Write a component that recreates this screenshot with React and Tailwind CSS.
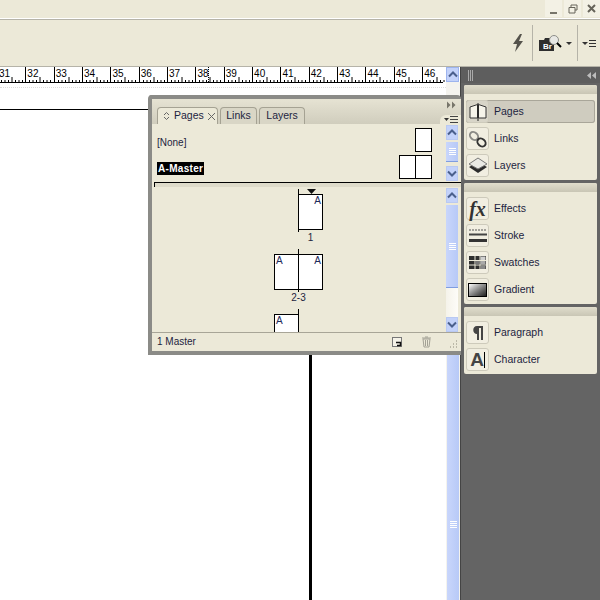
const rulerNumbers = [31, 32, 33, 34, 35, 36, 37, 38, 39, 40, 41, 42, 43, 44, 45, 46];

const UpIcon = () => (
  <svg width="10" height="7" viewBox="0 0 10 7">
    <path d="M1 5.5 L5 1.5 L9 5.5" fill="none" stroke="#4a5f8c" strokeWidth="2" />
  </svg>
);

const DownIcon = () => (
  <svg width="10" height="7" viewBox="0 0 10 7">
    <path d="M1 1.5 L5 5.5 L9 1.5" fill="none" stroke="#4a5f8c" strokeWidth="2" />
  </svg>
);

const Grip = () => (
  <div className="flex flex-col gap-px">
    <span className="h-px w-[7px] bg-white" />
    <span className="h-px w-[7px] bg-white" />
    <span className="h-px w-[7px] bg-white" />
    <span className="h-px w-[7px] bg-white" />
  </div>
);

const ScrollButton = ({ children }) => (
  <div className="flex h-[15px] w-[12px] shrink-0 items-center justify-center border border-[#b9c9f2] bg-[#c3d2fa]">
    {children}
  </div>
);

const Thumb = ({ className }) => (
  <div className={`flex w-[12px] shrink-0 items-center justify-center border-b border-[#7f9de0] bg-gradient-to-r from-[#c9d6fb] to-[#b7c9f7] ${className}`}>
    <Grip />
  </div>
);

const RulerCell = ({ n }) => (
  <div className="relative h-[15px] w-[28.35px] shrink-0 border-l border-black">
    <span className="absolute left-[1px] top-[0px] text-[10px] leading-[14px] text-black">{n}</span>
    <svg className="absolute bottom-0 left-0" width="28" height="15" viewBox="0 0 28 15">
      <path
        d="M3.5 15v-2M7 15v-2M10.5 15v-2M14 15v-5M17.5 15v-2M21 15v-2M24.5 15v-2"
        stroke="#000"
        strokeWidth="1"
      />
    </svg>
    {n === 38 && <span className="absolute left-[12px] top-0 h-[15px] border-l border-dotted border-black" />}
  </div>
);

const Thumbnail = ({ left, right, spine, className = '' }) => (
  <div className={`relative w-[25px] shrink-0 border border-black bg-white text-[10px] leading-[12px] text-[#1c2a5a] ${className}`}>
    {left && <span className="absolute left-[1px] top-0">A</span>}
    {right && <span className="absolute right-[1px] top-0">A</span>}
    {spine === 'left' && <span className="absolute -left-px -top-[6px] -bottom-[3px] w-px bg-black" />}
    {spine === 'right' && <span className="absolute -right-px -top-[6px] -bottom-[3px] w-px bg-black" />}
  </div>
);

const PagesIcon = () => (
  <svg width="20" height="18" viewBox="0 0 20 18">
    <path d="M2 4 L9.5 1.5 V15 H2 Z M10.5 1.5 L18 4 V15 H10.5 Z" fill="#f6f4ea" stroke="#333" />
    <path d="M10 0 V18" stroke="#222" />
  </svg>
);

const LinksIcon = () => (
  <svg width="20" height="18" viewBox="0 0 20 18">
    <ellipse cx="6" cy="6" rx="4.5" ry="3.5" transform="rotate(40 6 6)" fill="none" stroke="#8a8a86" strokeWidth="2" />
    <ellipse cx="13.5" cy="12.5" rx="4.5" ry="3.5" transform="rotate(40 13.5 12.5)" fill="none" stroke="#333" strokeWidth="2" />
  </svg>
);

const LayersIcon = () => (
  <svg width="20" height="18" viewBox="0 0 20 18">
    <path d="M1 10 L10 5 L19 10 L10 16 Z" fill="#2b2b2b" />
    <path d="M1 7 L10 1 L19 7 L10 12 Z" fill="#e9e9e4" stroke="#777" />
  </svg>
);

const EffectsIcon = () => (
  <span className="font-['Liberation_Serif',serif] text-[20px] font-bold italic leading-none text-[#333]">fx</span>
);

const StrokeIcon = () => (
  <svg width="20" height="18" viewBox="0 0 20 18">
    <path d="M1 3 H19" stroke="#555" strokeDasharray="2 1" />
    <path d="M1 7.5 H19" stroke="#444" strokeWidth="2" />
    <path d="M1 13.5 H19" stroke="#333" strokeWidth="3" />
  </svg>
);

const SwatchesIcon = () => (
  <svg width="18" height="16" viewBox="0 0 18 16">
    <rect x="0" y="1" width="17" height="13" fill="#2f2f2f" />
    <path d="M6 1v13M11 1v13M0 5.5h17M0 10h17" stroke="#ece9d8" />
    <rect x="11.5" y="1.5" width="5" height="3.5" fill="#cfcfcf" />
    <rect x="6.5" y="6" width="4" height="3.5" fill="#777" />
    <rect x="11.5" y="6" width="5" height="3.5" fill="#aaa" />
    <rect x="11.5" y="10.5" width="5" height="3.5" fill="#888" />
  </svg>
);

const GradientIcon = () => (
  <div className="h-[14px] w-[19px] border border-black bg-gradient-to-br from-white to-[#222]" />
);

const ParagraphIcon = () => (
  <svg width="14" height="16" viewBox="0 0 14 16">
    <path d="M6 1 H12 V15 H10 V3 H8 V15 H6 V9 C1 9 1 1 6 1 Z" fill="#444" />
  </svg>
);

const CharacterIcon = () => (
  <div className="flex items-center">
    <span className="font-['Liberation_Sans',sans-serif] text-[19px] font-bold leading-none text-[#444]">A</span>
    <span className="h-[16px] w-px bg-black" />
  </div>
);

const DockRow = ({ icon, label, active }) => (
  <div className={`flex h-[23px] items-center gap-[5px] rounded-[3px] ${active ? 'bg-[#cfccbf] shadow-[inset_0_0_0_1px_#a9a699]' : ''}`}>
    <div className={`flex h-[23px] w-[23px] items-center justify-center rounded-[3px] border border-[#cdcabb] ${active ? 'bg-[#d8d5c8]' : 'bg-[#f1eee1]'}`}>
      {icon}
    </div>
    <span className="text-[10.5px] text-[#1c2440]">{label}</span>
  </div>
);

const DockGroup = ({ rows, className = 'pb-[3px] pt-[5px]' }) => (
  <div className="mx-[3px] overflow-hidden rounded-[2px] bg-[#ece9d8]">
    <div className="h-[9px] bg-gradient-to-b from-[#e0ddcc] to-[#c9c6b5]" />
    <div className={`flex flex-col gap-[4px] px-[2px] ${className}`}>
      {rows.map((row) => (
        <DockRow key={row.label} {...row} />
      ))}
    </div>
  </div>
);

const Tab = ({ active, className, children }) => (
  <div className={`flex h-[17px] items-center gap-[2px] rounded-t-[4px] border border-b-0 border-[#a5a293] text-[10.5px] text-[#1c2440] ${active ? 'bg-[#ece9d8]' : 'bg-[#d9d6c6]'} ${className}`}>
    {children}
  </div>
);

const PagesPanel = () => (
  <div className="absolute left-[148px] top-[95px] flex h-[260px] w-[313px] flex-col rounded-t-[4px] border-4 border-r-0 border-[#8b8b87] bg-[#ece9d8]">
    <div className="relative flex h-[25px] items-end gap-[2px] bg-gradient-to-b from-[#e6e3d3] to-[#d0cdbd] pl-[5px]">
      <Tab active className="pl-[5px] pr-[1px]">
        <svg width="7" height="10" viewBox="0 0 7 10">
          <path d="M1 4 L3.5 1.5 L6 4 M1 6 L3.5 8.5 L6 6" fill="none" stroke="#666" />
        </svg>
        <span className="ml-[2px]">Pages</span>
        <svg className="ml-px" width="9" height="9" viewBox="0 0 9 9">
          <path d="M1 1 L8 8 M8 1 L1 8" stroke="#666" />
        </svg>
      </Tab>
      <Tab className="px-[5.5px]">Links</Tab>
      <Tab className="px-[6px]">Layers</Tab>
      <svg className="absolute right-[5px] top-[2px]" width="10" height="8" viewBox="0 0 10 8">
        <path d="M1 0.5 L4.5 4 L1 7.5 Z M6 0.5 L9.5 4 L6 7.5 Z" fill="#77756a" />
      </svg>
      <div className="absolute bottom-0 right-0 flex h-[9px] w-[21px] items-center justify-end gap-[1px] rounded-tl-[6px] bg-[#ece9d8] pr-[3px]">
        <svg width="5" height="3" viewBox="0 0 5 3">
          <path d="M0 0 H5 L2.5 3 Z" fill="#333" />
        </svg>
        <div className="flex flex-col gap-[2px]">
          <span className="h-px w-[8px] bg-[#444]" />
          <span className="h-px w-[8px] bg-[#444]" />
          <span className="h-px w-[8px] bg-[#444]" />
        </div>
      </div>
    </div>

    <div className="flex h-[58px] pl-[5px]">
      <div className="flex flex-1 flex-col pr-[14px] pt-[3px]">
        <div className="flex h-[26px] items-center justify-between">
          <span className="mt-[4px] text-[10px] text-[#1c2440]">[None]</span>
          <div className="h-[24px] w-[17px] border border-black bg-white" />
        </div>
        <div className="mt-[1px] flex h-[26px] items-center justify-between">
          <span className="mt-[2px] bg-black px-px text-[10px] font-bold leading-[13px] tracking-[0.3px] text-white">A-Master</span>
          <div className="flex h-[24px] w-[33px] border border-black bg-white">
            <span className="ml-[15px] h-full w-px bg-black" />
          </div>
        </div>
      </div>
      <div className="flex w-[15px] flex-col items-start py-px">
        <ScrollButton><UpIcon /></ScrollButton>
        <Thumb className="mt-[2px] h-[20px]" />
        <div className="flex-1" />
        <ScrollButton><DownIcon /></ScrollButton>
      </div>
    </div>

    <div className="ml-[2px] h-[5px] border-l border-t border-black bg-[#dedbca]" />

    <div className="flex h-[145px] overflow-hidden">
      <div className="flex flex-1 flex-col items-start pl-[122px] pt-[2px] text-[10px] text-[#1c2440]">
        <svg className="ml-[33px] shrink-0" width="9" height="5" viewBox="0 0 9 5">
          <path d="M0 0 H9 L4.5 5 Z" fill="#111" />
        </svg>
        <Thumbnail right spine="left" className="ml-[24px] h-[36px]" />
        <span className="ml-[24px] mt-px w-[25px] shrink-0 text-center leading-[14px]">1</span>
        <div className="mt-[9px] flex h-[36px] w-[49px] shrink-0">
          <Thumbnail left className="h-full" />
          <Thumbnail right spine="left" className="-ml-px h-full" />
        </div>
        <span className="mt-px w-[49px] shrink-0 text-center leading-[14px]">2-3</span>
        <Thumbnail left spine="right" className="mt-[9px] h-[30px]" />
      </div>
      <div className="flex w-[15px] flex-col items-start pt-px">
        <ScrollButton><UpIcon /></ScrollButton>
        <Thumb className="mt-[2px] h-[83px]" />
        <div className="w-[12px] flex-1 bg-gradient-to-r from-[#f5f3ea] to-[#fdfcf8]" />
        <ScrollButton><DownIcon /></ScrollButton>
      </div>
    </div>

    <div className="relative flex h-[19px] items-center border-t border-[#a8a597] pb-[2px] pl-[5px] text-[10px] text-[#1c2440]">
      1 Master
      <svg className="absolute right-[59px] top-[4px]" width="10" height="10" viewBox="0 0 10 10">
        <rect x="0.5" y="0.5" width="9" height="9" fill="#f4f2e8" stroke="#777" />
        <path d="M4 5.5 H8.5 V8.5 H5" fill="none" stroke="#111" strokeWidth="1.5" />
      </svg>
      <svg className="absolute right-[29px] top-[3px]" width="11" height="12" viewBox="0 0 11 12">
        <path d="M1 2 H10 M4 1 H7 M2 3 L3 11 H8 L9 3 Z M4.5 4 V10 M6.5 4 V10" fill="none" stroke="#a3a195" />
      </svg>
      <svg className="absolute bottom-[1px] right-[3px]" width="10" height="10" viewBox="0 0 10 10">
        <path d="M8 1h1M5 4h1M8 4h1M2 7h1M5 7h1M8 7h1" stroke="#8a8878" />
      </svg>
    </div>
  </div>
);

const App = () => (
  <div className="relative flex h-[600px] w-[600px] flex-col overflow-hidden bg-white font-['Liberation_Sans',sans-serif]">
    <div className="flex h-[18px] shrink-0 justify-end gap-[2px] bg-[#ece9d8]">
      <div className="flex h-[17px] w-[17px] items-end justify-center bg-[#f3f1e5] pb-[3px]">
        <span className="h-[2px] w-[7px] bg-[#77756a]" />
      </div>
      <div className="flex h-[17px] w-[17px] items-center justify-center bg-[#f3f1e5]">
        <svg width="10" height="10" viewBox="0 0 10 10">
          <path d="M3 3 V1 H9 V6 H7 M1 3.5 H7 V9 H1 Z" fill="none" stroke="#66645a" />
        </svg>
      </div>
      <div className="flex h-[17px] w-[17px] items-center justify-center bg-[#f3f1e5]">
        <svg width="9" height="9" viewBox="0 0 9 9">
          <path d="M1 1 L8 8 M8 1 L1 8" stroke="#66645a" strokeWidth="2" />
        </svg>
      </div>
    </div>
    <div className="h-[2px] shrink-0 border-t border-white bg-[#b5b3a8]" />

    <div className="flex h-[47px] shrink-0 items-center justify-end border-b border-b-[#b5b3a8] bg-[#ece9d8] pr-[4px]">
      <svg width="12" height="18" viewBox="0 0 12 18">
        <path d="M8 0 L1 10 H5 L3 18 L11 7 H7 L10 0 Z" fill="#55534c" />
      </svg>
      <span className="ml-[8px] h-[36px] w-px bg-[#b5b3a8]" />
      <div className="relative ml-[6px] h-[17px] w-[23px]">
        <svg width="23" height="17" viewBox="0 0 23 17">
          <path d="M0 5 H5 L6 3 H15 V16 H0 Z" fill="#2e2e2e" />
          <circle cx="15" cy="5" r="4.5" fill="#e8e8e4" stroke="#8d8d88" />
          <path d="M18 8 L22 12" stroke="#000" strokeWidth="2" />
        </svg>
        <span className="absolute left-[4px] top-[7px] text-[8px] font-bold leading-[9px] text-white">Br</span>
      </div>
      <svg className="ml-[4px]" width="6" height="3" viewBox="0 0 6 3">
        <path d="M0 0 H6 L3 3 Z" fill="#333" />
      </svg>
      <span className="ml-[5px] h-[36px] w-px bg-[#b5b3a8]" />
      <svg className="ml-[4px]" width="6" height="3" viewBox="0 0 6 3">
        <path d="M0 0 H6 L3 3 Z" fill="#333" />
      </svg>
      <div className="ml-px flex flex-col gap-[2px]">
        <span className="h-px w-[7px] bg-[#333]" />
        <span className="h-px w-[7px] bg-[#333]" />
        <span className="h-px w-[7px] bg-[#333]" />
      </div>
    </div>

    <div className="flex min-h-0 flex-1">
      <div className="flex w-[461px] shrink-0 border-r border-[#444]">
        <div className="flex w-[446px] flex-col overflow-hidden">
          <div className="flex h-[16px] shrink-0 -translate-x-[3px] border-b border-black">
            {rulerNumbers.map((n) => (
              <RulerCell key={n} n={n} />
            ))}
          </div>
          <div className="flex-1 pt-[4px]">
            <div className="border-t border-dotted border-[#ddd]" />
            <div className="mt-[21px] h-px w-[150px] bg-black" />
            <div className="ml-[309px] mt-[243px] h-[248px] w-[3px] bg-black" />
          </div>
        </div>
        <div className="flex w-[14px] flex-col bg-white">
          <div className="flex h-[15px] w-[13px] items-center justify-center border border-[#9db4ee] bg-[#c3d2fa]">
            <UpIcon />
          </div>
          <div className="flex-1 bg-[#f4f3ee] pt-[273px]">
            <div className="mx-px flex h-[245px] items-end justify-center bg-gradient-to-r from-[#c9d6fb] to-[#b7c9f7] pb-[72px]">
              <Grip />
            </div>
          </div>
        </div>
      </div>

      <div className="flex-1 bg-[#646464]">
        <div className="flex h-[16px] items-center justify-between bg-[#5e5e5e] pl-[7px] pr-[4px]">
          <div className="flex gap-px">
            <span className="h-[11px] w-px bg-[#aaa]" />
            <span className="h-[11px] w-px bg-[#aaa]" />
            <span className="h-[11px] w-px bg-[#aaa]" />
          </div>
          <svg width="9" height="7" viewBox="0 0 9 7">
            <path d="M4 0 V7 L0 3.5 Z M9 0 V7 L5 3.5 Z" fill="#bdbdbd" />
          </svg>
        </div>
        <div className="flex flex-col gap-[3px] pt-[2px]">
          <DockGroup
            className="pb-[3px] pt-[6px]"
            rows={[
              { icon: <PagesIcon />, label: 'Pages', active: true },
              { icon: <LinksIcon />, label: 'Links' },
              { icon: <LayersIcon />, label: 'Layers' },
            ]}
          />
          <DockGroup
            rows={[
              { icon: <EffectsIcon />, label: 'Effects' },
              { icon: <StrokeIcon />, label: 'Stroke' },
              { icon: <SwatchesIcon />, label: 'Swatches' },
              { icon: <GradientIcon />, label: 'Gradient' },
            ]}
          />
          <DockGroup
            rows={[
              { icon: <ParagraphIcon />, label: 'Paragraph' },
              { icon: <CharacterIcon />, label: 'Character' },
            ]}
          />
        </div>
      </div>
    </div>

    <PagesPanel />
  </div>
);

export default App;
